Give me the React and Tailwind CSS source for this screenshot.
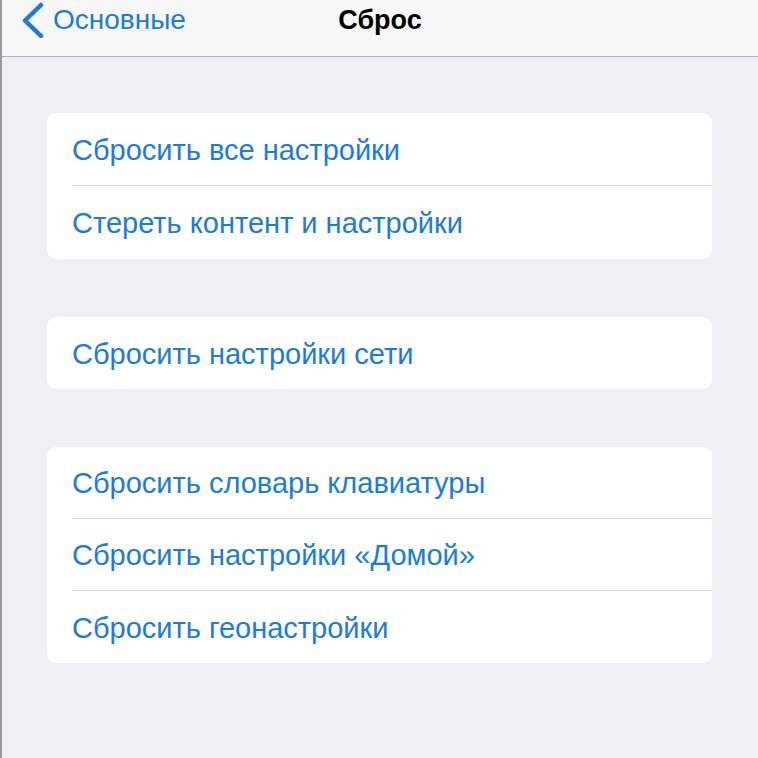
const groups = [
  ["Сбросить все настройки", "Стереть контент и настройки"],
  ["Сбросить настройки сети"],
  ["Сбросить словарь клавиатуры", "Сбросить настройки «Домой»", "Сбросить геонастройки"],
];

export default function App() {
  return (
    <div
      className="w-[758px] h-[758px] overflow-hidden bg-[#efeff4] border-l-2 border-[#9a9a9e]"
      style={{ fontFamily: '"Liberation Sans", Arial, sans-serif' }}
    >
      <header className="relative h-[57px] bg-[#f7f7f8] border-b border-[#b2b2b6]">
        <div className="flex items-center pl-[19px] pt-[2px] text-[#1a7be0]">
          <svg width="24" height="36" viewBox="0 0 24 36">
            <path d="M20 3 L4 18.5 L20 34" fill="none" stroke="currentColor" strokeWidth="4.5" strokeLinecap="round" strokeLinejoin="round" />
          </svg>
          <span className="ml-[8px] text-[28px] leading-none">Основные</span>
        </div>
        <div className="absolute inset-x-0 top-[7px] flex justify-center pointer-events-none">
          <span className="text-[27px] font-bold leading-none text-black">Сброс</span>
        </div>
      </header>

      <div className="flex flex-col gap-[58px] pt-[56px] pl-[45px] pr-[46px]">
        {groups.map((rows, gi) => (
          <div key={gi} className="bg-white rounded-[9px] overflow-hidden">
            {rows.map((t, i) => (
              <div key={i} className="pl-[25px]">
                <div
                  className={
                    "flex items-center pt-[3px] text-[29px] text-[#1a7be0] " +
                    (gi === 0 ? "h-[73px] " : "h-[72px] ") +
                    (i < rows.length - 1 ? "border-b border-[#d5d5d9]" : "")
                  }
                >
                  {t}
                </div>
              </div>
            ))}
          </div>
        ))}
      </div>
    </div>
  );
}
